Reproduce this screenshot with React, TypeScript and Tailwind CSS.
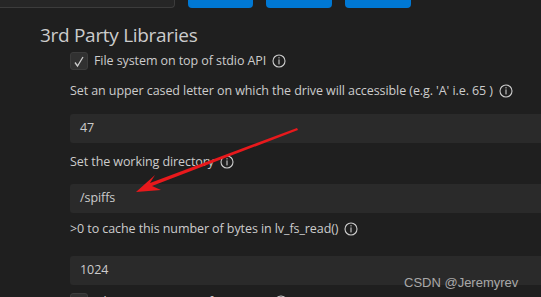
import React from 'react'

function InfoIcon() {
  return <svg width="14" height="14" viewBox="0 0 14 14" className="shrink-0">
    <circle cx="7" cy="7" r="6" fill="none" stroke="#cccccc" strokeWidth="1.1" />
    <rect x="6.45" y="3.2" width="1.1" height="1.2" fill="#cccccc" />
    <rect x="6.45" y="5.4" width="1.1" height="5" fill="#cccccc" />
  </svg>
}

function Checkbox() {
  return <div className="w-[18px] h-[18px] rounded-[3px] bg-[#313131] border border-[#3c3c3c] flex items-center justify-center shrink-0">
    <svg width="14" height="14" viewBox="0 0 14 14">
      <path d="M3 8.5 L5.5 12 L11 3" fill="none" stroke="#cccccc" strokeWidth="1.3" />
    </svg>
  </div>
}

function TextBox(props: { value: string }) {
  return <div className="h-[29px] w-full bg-[#2a2a2a] rounded-l-[3px] flex items-center pl-[10px] text-[12.5px] tracking-[-0.08px] text-[#cccccc]">
    {props.value}
  </div>
}

function Label(props: { text: string }) {
  return <div className="flex items-center gap-[6px] text-[12.5px] tracking-[-0.08px] text-[#cccccc] h-[20px]">
    <span>{props.text}</span>
    <InfoIcon />
  </div>
}

export default function App() {
  return <div className="relative w-[541px] h-[297px] overflow-hidden bg-[#1f1f1f]" style={{ fontFamily: '"Open Sans", "Noto Sans", sans-serif' }}>
    <div className="flex items-start h-[8px] gap-[13px]">
      <div className="w-[175px] h-[8px] bg-[#262626] border-b border-r border-[#3c3c3c] rounded-br-[4px]" />
      <div className="w-[65px] h-[8px] bg-[#0078d4] rounded-b-[4px]" />
      <div className="w-[66px] h-[8px] bg-[#0078d4] rounded-b-[4px]" />
      <div className="w-[66px] h-[8px] bg-[#0078d4] rounded-b-[4px]" />
    </div>

    <div className="pl-[40px] mt-[14px] text-[19px] tracking-[-0.3px] leading-[26px] text-[#cccccc]">3rd Party Libraries</div>

    <div className="pl-[70px] mt-[4px] flex flex-col">
      <div className="flex items-center gap-[6px] h-[18px]">
        <Checkbox />
        <Label text="File system on top of stdio API" />
      </div>
      <div className="mt-[11px]"><Label text="Set an upper cased letter on which the drive will accessible (e.g. 'A' i.e. 65 )" /></div>
      <div className="mt-[13px]"><TextBox value="47" /></div>
      <div className="mt-[9px]"><Label text="Set the working directory" /></div>
      <div className="mt-[12px]"><TextBox value="/spiffs" /></div>
      <div className="mt-[6px]"><Label text=">0 to cache this number of bytes in lv_fs_read()" /></div>
      <div className="mt-[17px]"><TextBox value="1024" /></div>
      <div className="flex items-center gap-[6px] h-[18px] mt-[8px]">
        <Checkbox />
        <Label text="File system on top of posix API" />
      </div>
    </div>

    <svg className="absolute left-0 top-0 pointer-events-none" width="541" height="297">
      <path d="M297 128 L150 183 L155 175 L136 192 L161 190 L152 186 L298 130 Z" fill="#e8191c" />
    </svg>

    <div className="absolute left-[404px] top-[273px] text-[13px] text-[#a8a8a8]" style={{ fontFamily: '"Liberation Sans", sans-serif' }}>CSDN @Jeremyrev</div>
  </div>
}
